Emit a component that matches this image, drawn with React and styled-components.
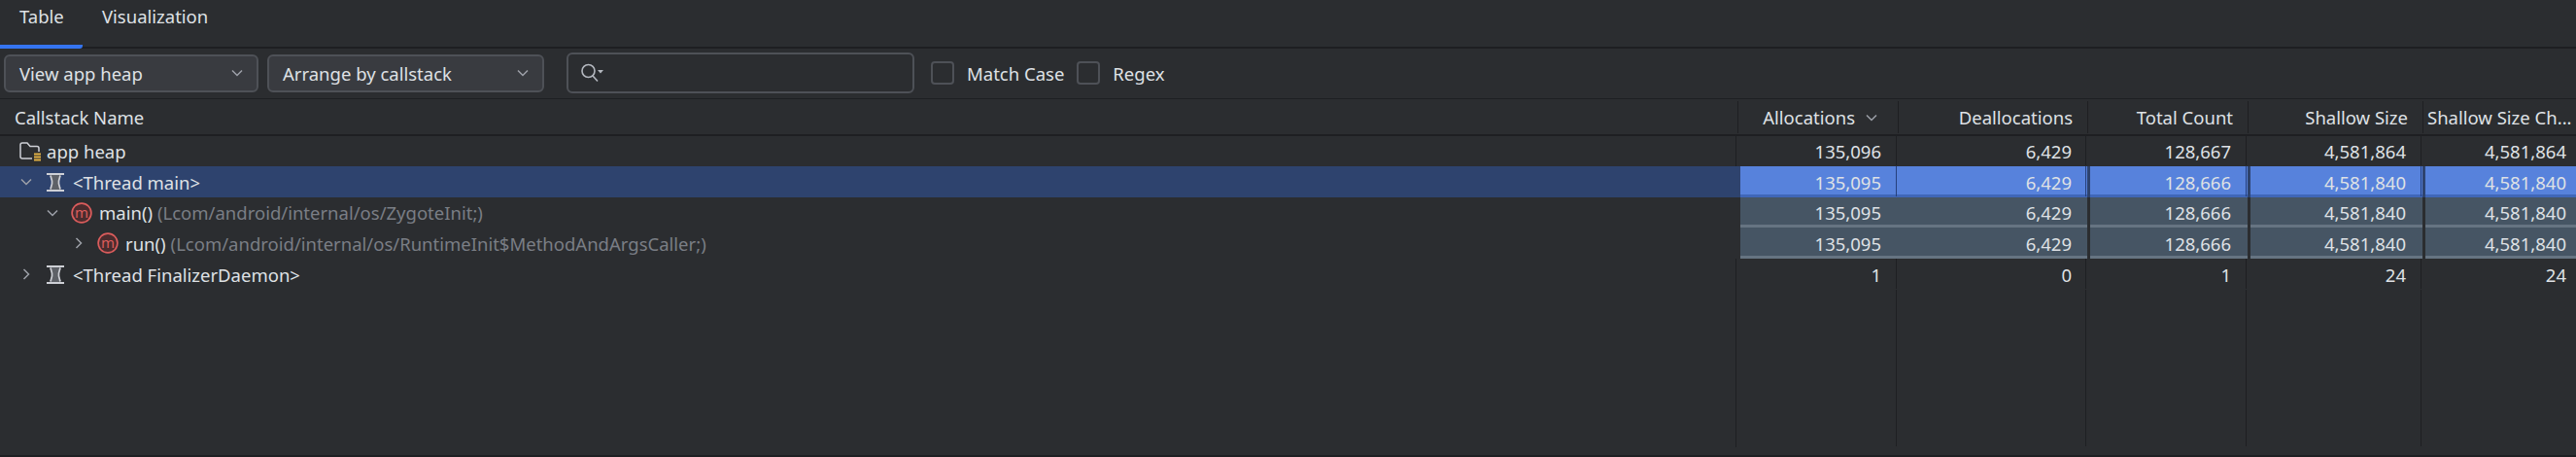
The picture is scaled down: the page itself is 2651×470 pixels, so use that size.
import React from "react";
import styled, { createGlobalStyle } from "styled-components";

const Global = createGlobalStyle`
  html, body { margin: 0; padding: 0; background: #2b2d30; }
  * { box-sizing: border-box; }
`;

const LINE = "#1e1f22";
const TEXT = "#dfe1e5";
const COLS_BODY = "1787px 165px 196px 165px 180px 158px";
const COLS_HEAD = "1789px 165px 195px 165px 180px 157px";

const Page = styled.div`
  width: 2651px;
  height: 470px;
  display: flex;
  flex-direction: column;
  background: #2b2d30;
  color: ${TEXT};
  font-family: "Noto Sans", "Open Sans", sans-serif;
  font-size: 18.5px;
  border-bottom: 2px solid ${LINE};
  overflow: hidden;
`;

const TabBar = styled.div`
  height: 50px;
  flex: none;
  display: flex;
  border-bottom: 2px solid ${LINE};
`;

const Tab = styled.div`
  height: 50px;
  margin-bottom: -2px;
  padding: 0 0 13px 20px;
  width: ${(p) => (p.$active ? "85px" : "auto")};
  display: flex;
  align-items: center;
  white-space: nowrap;
  border-bottom: 4px solid ${(p) => (p.$active ? "#3574f0" : "transparent")};
  border-bottom-right-radius: 3px;
`;

const Toolbar = styled.div`
  height: 52px;
  flex: none;
  display: flex;
  align-items: center;
  padding: 0 0 1px 4px;
  border-bottom: 1px solid ${LINE};
`;

const Dropdown = styled.div`
  width: ${(p) => p.$width}px;
  height: 39px;
  margin-right: 9px;
  padding: 0 14px 0 14px;
  display: flex;
  align-items: center;
  justify-content: space-between;
  background: #393b40;
  border: 2px solid #4e5157;
  border-radius: 6px;
`;

const SearchBox = styled.div`
  width: 358px;
  height: 42px;
  margin: 0 17px 0 14px;
  padding-left: 12px;
  display: flex;
  align-items: center;
  border: 2px solid #4e5157;
  border-radius: 6px;
`;

const Check = styled.label`
  display: flex;
  align-items: center;
  gap: 13px;
  margin-right: 13px;
  white-space: nowrap;
`;

const CheckBox = styled.span`
  width: 24px;
  height: 24px;
  border: 2px solid #4e5157;
  border-radius: 4px;
`;

const HeaderRow = styled.div`
  height: 38px;
  flex: none;
  display: grid;
  grid-template-columns: ${COLS_HEAD};
  padding-top: 2px;
  border-bottom: 2px solid ${LINE};
`;

const HeaderCell = styled.div`
  display: flex;
  align-items: center;
  justify-content: ${(p) => (p.$left ? "flex-start" : "flex-end")};
  gap: 11px;
  height: 33px;
  padding: 0 ${(p) => p.$pad || 0}px 0 ${(p) => p.$padLeft || 0}px;
  border-right: ${(p) => (p.$last ? "none" : `1px solid ${LINE}`)};
  white-space: nowrap;
  overflow: hidden;
`;

const Body = styled.div`
  flex: 1;
  min-height: 0;
  display: flex;
  flex-direction: column;
  padding-bottom: 8px;
`;

const Row = styled.div`
  height: ${(p) => p.$h}px;
  flex: none;
  display: grid;
  grid-template-columns: ${COLS_BODY};
  background: ${(p) => (p.$selected ? "#2e436e" : "transparent")};
`;

const Filler = styled.div`
  flex: 1;
  display: grid;
  grid-template-columns: ${COLS_BODY};
`;

const sepLayer = (color, inset) =>
  `linear-gradient(${color}, ${color}) no-repeat right ${inset}px top / 1px calc(100% - 1px)`;

const barLayers = {
  selected: "linear-gradient(#3f67b8, #3f67b8) no-repeat left bottom / 100% 3px, #5782dc",
  active: "linear-gradient(#667482, #667482) no-repeat left bottom / 100% 3px, #465564",
};

const NameCell = styled.div`
  display: flex;
  align-items: center;
  padding-left: ${(p) => p.$indent}px;
  white-space: nowrap;
  overflow: hidden;
  border-right: ${(p) => (p.$plain ? `1px solid ${LINE}` : "none")};
`;

const ValueCell = styled.div`
  display: flex;
  align-items: center;
  justify-content: flex-end;
  margin-left: ${(p) => (p.$kind ? p.$lead : 0)}px;
  padding-right: ${(p) => p.$pad}px;
  background: ${(p) => {
    const layers = [];
    if (p.$inset >= 0 && p.$kind !== "active") {
      layers.push(sepLayer(p.$kind === "selected" ? "#26407c" : LINE, p.$inset));
    }
    if (p.$kind) layers.push(barLayers[p.$kind]);
    return layers.join(", ") || "none";
  }};
`;

const Arrow = styled.span`
  width: 27px;
  margin-right: 6px;
  flex: none;
  display: flex;
  justify-content: center;
`;

const IconSlot = styled.span`
  width: 22px;
  height: 22px;
  flex: none;
  display: flex;
  align-items: center;
  justify-content: center;
  margin-right: ${(p) => p.$gap || 7}px;
`;

const Signature = styled.span`
  color: #7a7e85;
  margin-left: 5px;
`;

const Chevron = ({ open, size = 12 }) => (
  <svg width={size} height={size} viewBox="0 0 12 12" fill="none" stroke="#9da0a8" strokeWidth="1.5">
    {open ? <polyline points="1,3.5 6,8.5 11,3.5" /> : <polyline points="3.5,1 8.5,6 3.5,11" />}
  </svg>
);

const SearchIcon = () => (
  <svg width="24" height="22" viewBox="0 0 24 22" fill="none" stroke="#b4b8bf" strokeWidth="1.6">
    <circle cx="8.5" cy="9" r="6.5" />
    <line x1="13" y1="14" x2="18" y2="19.5" />
    <polygon points="18,8 24,8 21,11.5" fill="#b4b8bf" stroke="none" />
  </svg>
);

const FolderIcon = () => (
  <svg width="22" height="20" viewBox="0 0 22 20" fill="none">
    <path
      d="M13 17H3a2 2 0 0 1-2-2V3a2 2 0 0 1 2-2h5l3 3.500h7a2 2 0 0 1 2 2V10"
      stroke="#ced0d6"
      strokeWidth="1.500"
    />
    <path d="M15 12.500h7M15 15.500h7M15 18.500h7" stroke="#e0b044" strokeWidth="1.800" />
  </svg>
);

const ThreadIcon = () => (
  <svg width="18" height="19" viewBox="0 0 18 19" fill="none">
    <path d="M3.500 2v2h1l1 4v3l-1 4h-1v2h11v-2h-1l-1-4V8l1-4h1V2z" fill="#5e6167" />
    <path d="M4 2.500l1.500 5.500v3L4 16.500M14 2.500L12.500 8v3l1.500 5.500" stroke="#ced0d6" strokeWidth="1.700" />
    <path d="M0 1h18M0 18h18" stroke="#ced0d6" strokeWidth="2" />
  </svg>
);

const MethodIcon = () => (
  <svg width="22" height="22" viewBox="0 0 22 22">
    <circle cx="11" cy="11" r="9.900" fill="#4a2c2e" stroke="#db5c5c" strokeWidth="1.700" />
    <text x="11" y="15.500" textAnchor="middle" fontFamily="Noto Sans, sans-serif" fontSize="15" fill="#db5c5c">
      m
    </text>
  </svg>
);

const columns = [
  { pad: 16, lead: 4, inset: 0 },
  { pad: 16, lead: 0, inset: 1 },
  { pad: 17, lead: 3, inset: 1 },
  { pad: 17, lead: 3, inset: 1 },
  { pad: 10, lead: 3, inset: -1 },
];

const rows = [
  { h: 31, values: ["135,096", "6,429", "128,667", "4,581,864", "4,581,864"], indent: 20, icon: "folder", label: "app heap" },
  { h: 32, kind: "selected", values: ["135,095", "6,429", "128,666", "4,581,840", "4,581,840"], indent: 13, open: true, icon: "thread", label: "<Thread main>" },
  { h: 31, kind: "active", values: ["135,095", "6,429", "128,666", "4,581,840", "4,581,840"], indent: 40, open: true, icon: "method", label: "main()", sig: "(Lcom/android/internal/os/ZygoteInit;)" },
  { h: 32, kind: "active", values: ["135,095", "6,429", "128,666", "4,581,840", "4,581,840"], indent: 67, open: false, icon: "method", label: "run()", sig: "(Lcom/android/internal/os/RuntimeInit$MethodAndArgsCaller;)" },
  { h: 32, values: ["1", "0", "1", "24", "24"], indent: 13, open: false, icon: "thread", label: "<Thread FinalizerDaemon>" },
];

const icons = { folder: <FolderIcon />, thread: <ThreadIcon />, method: <MethodIcon /> };

export default function App() {
  return (
    <Page>
      <Global />
      <TabBar>
        <Tab $active>Table</Tab>
        <Tab>Visualization</Tab>
      </TabBar>
      <Toolbar>
        <Dropdown $width={262}>
          View app heap
          <Chevron open />
        </Dropdown>
        <Dropdown $width={285}>
          Arrange by callstack
          <Chevron open />
        </Dropdown>
        <SearchBox>
          <SearchIcon />
        </SearchBox>
        <Check>
          <CheckBox />
          Match Case
        </Check>
        <Check>
          <CheckBox />
          Regex
        </Check>
      </Toolbar>
      <HeaderRow>
        <HeaderCell $left $padLeft={15}>Callstack Name</HeaderCell>
        <HeaderCell $pad={21}>
          Allocations
          <Chevron open />
        </HeaderCell>
        <HeaderCell $pad={15}>Deallocations</HeaderCell>
        <HeaderCell $pad={15}>Total Count</HeaderCell>
        <HeaderCell $pad={15}>Shallow Size</HeaderCell>
        <HeaderCell $left $last $padLeft={4}>Shallow Size Ch...</HeaderCell>
      </HeaderRow>
      <Body>
        {rows.map((r) => (
          <Row key={r.label} $h={r.h} $selected={r.kind === "selected"}>
            <NameCell $indent={r.indent} $plain={!r.kind}>
              {r.open !== undefined && (
                <Arrow>
                  <Chevron open={r.open} />
                </Arrow>
              )}
              <IconSlot $gap={r.icon === "folder" ? 6 : 7}>{icons[r.icon]}</IconSlot>
              <span>{r.label}</span>
              {r.sig && <Signature>{r.sig}</Signature>}
            </NameCell>
            {r.values.map((v, i) => (
              <ValueCell key={i} $kind={r.kind} $lead={columns[i].lead} $pad={columns[i].pad} $inset={columns[i].inset}>
                {v}
              </ValueCell>
            ))}
          </Row>
        ))}
        <Filler>
          <NameCell $indent={0} $plain />
          {columns.map((c, i) => (
            <ValueCell key={i} $pad={c.pad} $lead={c.lead} $inset={c.inset} />
          ))}
        </Filler>
      </Body>
    </Page>
  );
}
